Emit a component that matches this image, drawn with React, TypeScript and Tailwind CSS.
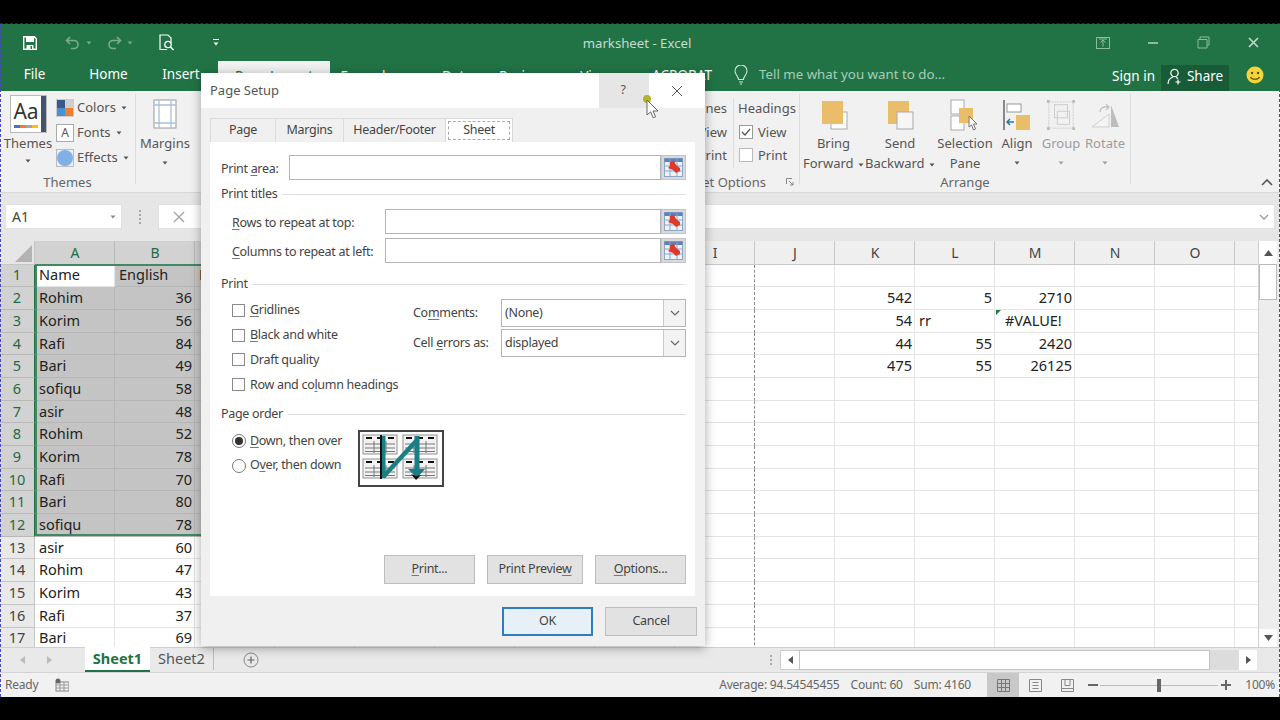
import React from "react";

const FONT = "font-['Noto_Sans','Open_Sans',sans-serif]";

const data: [string, string][] = [
  ["Name", "English"], ["Rohim", "36"], ["Korim", "56"], ["Rafi", "84"], ["Bari", "49"], ["sofiqu", "58"],
  ["asir", "48"], ["Rohim", "52"], ["Korim", "78"], ["Rafi", "70"], ["Bari", "80"], ["sofiqu", "78"],
  ["asir", "60"], ["Rohim", "47"], ["Korim", "43"], ["Rafi", "37"], ["Bari", "69"],
];
const right: Record<number, [string, string, string]> = {
  2: ["542", "5", "2710"],
  3: ["54", "rr", "#VALUE!"],
  4: ["44", "55", "2420"],
  5: ["475", "55", "26125"],
};
const letters = "ABCDEFGHIJKLMNO".split("");

function Caret({ className = "" }: { className?: string }) {
  return (
    <svg width="6" height="4" viewBox="0 0 6 4" className={className}>
      <path d="M0.5 0.5h5L3 3.5z" fill="currentColor" />
    </svg>
  );
}

function GridRow({ row }: { row: number }) {
  const sel = row <= 12;
  const d = data[row - 1];
  const r = right[row];
  return (
    <div className="flex h-[22.69px] shrink-0">
      <div className={`w-[35px] shrink-0 flex items-center justify-center text-[14.5px] border-r border-b ${sel ? "bg-[#d2d2d2] text-[#1f6b41] border-[#b9b9b9] border-r-[#217346]" : "bg-[#e9e9e9] text-[#444] border-[#c6c6c6]"}`}>
        {row}
      </div>
      {letters.map((l, i) => {
        const isA = l === "A";
        const isB = l === "B";
        const isC = l === "C";
        let cls = "bg-white border-[#e4e4e4]";
        let txt: React.ReactNode = null;
        let align = "justify-start";
        if (isA || isB) {
          txt = isA ? d[0] : d[1];
          if (isB && row > 1) align = "justify-end";
        }
        if (isC && row === 1) txt = "Math";
        if ((isA || isB || isC) && sel && !(row === 1 && isA)) cls = "bg-[#c4c4c4] border-[#b6b6b6]";
        if (r && l === "K") { txt = r[0]; align = "justify-end"; }
        if (r && l === "L") { txt = r[1]; align = r[1] === "rr" ? "justify-start" : "justify-end"; }
        if (r && l === "M") { txt = r[2]; align = r[2] === "#VALUE!" ? "justify-start pl-[10px]" : "justify-end"; }
        const dashed = l === "I" ? "border-r-[#8a8a8a] [border-right-style:dashed]" : "";
        return (
          <div key={i} className={`relative w-[80px] shrink-0 flex items-center pl-[4px] pr-[2px] text-[14.5px] text-[#222] border-r border-b ${cls} ${align} ${dashed}`}>
            {txt}
            {row === 3 && l === "M" && (
              <svg width="5" height="5" viewBox="0 0 5 5" className="absolute left-[1px] top-0">
                <path d="M0 0h5L0 5z" fill="#1f7a45" />
              </svg>
            )}
          </div>
        );
      })}
      <div className="flex-1 border-b border-[#e4e4e4]" />
    </div>
  );
}

function RefButton() {
  return (
    <div className="w-[25px] h-[25px] bg-[#d9d9d9] border border-[#c4c4c4] flex items-center justify-center shrink-0">
      <svg width="19" height="19" viewBox="0 0 19 19">
        <rect x="0.5" y="0.5" width="18" height="18" fill="#eef3fa" stroke="#8ba6cc" />
        <rect x="0.5" y="0.5" width="18" height="3.500" fill="#5f81b5" />
        <path d="M1 8h17M1 13h17M6 1v17M13 1v17" stroke="#8ba6cc" strokeWidth="1" />
        <path d="M6 4l4-1 2 4 4 3v3l-4 2-3-3-5-2 2-2z" fill="#e0392a" />
      </svg>
    </div>
  );
}

function Under({ pre, u, post }: { pre?: string; u: string; post?: string }) {
  return (
    <span className="whitespace-nowrap">
      {pre}
      <span className="underline decoration-[#777] underline-offset-2">{u}</span>
      {post}
    </span>
  );
}

function Check({ children }: { children: React.ReactNode }) {
  return (
    <div className="flex items-center h-[24.7px] gap-[5px] whitespace-nowrap">
      <div className="w-[13px] h-[13px] bg-white border border-[#8a8a8a] shrink-0" />
      <span className="pt-[1px]">{children}</span>
    </div>
  );
}

function Radio({ on, children }: { on?: boolean; children: React.ReactNode }) {
  return (
    <div className="flex items-center h-[24.7px] gap-[4px] whitespace-nowrap">
      <div className="w-[14px] h-[14px] rounded-full bg-white border border-[#777] flex items-center justify-center shrink-0">
        {on && <div className="w-[8px] h-[8px] rounded-full bg-[#333]" />}
      </div>
      <span>{children}</span>
    </div>
  );
}

function Section({ title }: { title: string }) {
  return (
    <div className="flex items-center gap-[5px] h-[20px]">
      <span>{title}</span>
      <div className="flex-1 h-px bg-[#dedede]" />
    </div>
  );
}

function Select({ value }: { value: string }) {
  return (
    <div className="w-[185px] h-[28px] bg-white border border-[#b5b5b5] flex items-center pl-[3px]">
      <span className="flex-1">{value}</span>
      <div className="w-[22px] h-full border-l border-[#c9c9c9] bg-[#f3f3f3] flex items-center justify-center">
        <svg width="10" height="6" viewBox="0 0 10 6"><path d="M1 1l4 4 4-4" fill="none" stroke="#666" strokeWidth="1.200" /></svg>
      </div>
    </div>
  );
}

function DlgBtn({ w, children, primary }: { w: string; children: React.ReactNode; primary?: boolean }) {
  return (
    <div className={`${w} flex items-center justify-center ${primary ? "bg-[#e7eff7] border-2 border-[#2f7cc0]" : "bg-[#e2e2e2] border border-[#bdbdbd]"}`}>
      {children}
    </div>
  );
}

function OrderPicture() {
  const table = (x: number, y: number) => (
    <g key={`${x}-${y}`}>
      <rect x={x} y={y} width="34" height="19" fill="#f2f2f2" stroke="#777" strokeWidth="0.8" />
      <path d={`M${x + 3} ${y + 3}h6M${x + 14} ${y + 3}h6M${x + 25} ${y + 3}h6`} stroke="#111" strokeWidth="2.200" />
      <path d={`M${x + 2} ${y + 9}h30M${x + 2} ${y + 13}h30M${x + 2} ${y + 16.500}h30M${x + 11} ${y + 6}v12M${x + 23} ${y + 6}v12`} stroke="#777" strokeWidth="1" />
    </g>
  );
  return (
    <div className="w-[86px] h-[57px] border-2 border-[#444] bg-white mt-[1px]">
      <svg width="82" height="53" viewBox="0 0 82 53">
        {table(3, 3)}{table(43, 3)}{table(3, 27)}{table(43, 27)}
        <path d="M23.500 4v42" stroke="#1a7f85" strokeWidth="4" />
        <path d="M21 3v44" stroke="#111" strokeWidth="2" />
        <path d="M23 45L58 7" stroke="#1a7f85" strokeWidth="4.500" />
        <path d="M57 4v36" stroke="#1a7f85" strokeWidth="5" />
        <path d="M48 37h17l-8 9z" fill="#1a7f85" />
        <path d="M51 42l5 6 5-5-5 1z" fill="#111" />
      </svg>
    </div>
  );
}

function Dialog() {
  return (
    <div className="absolute left-[201px] top-[73px] w-[504px] h-[573px] bg-[#f0f0f0] shadow-[0_2px_10px_rgba(0,0,0,0.35)] text-[12.5px] tracking-[-0.3px] text-[#444] flex flex-col">
      <div className="h-[35px] bg-white flex items-center shrink-0">
        <span className="pl-[9px] pt-[1px] text-[13px] tracking-normal text-[#555] flex-1">Page Setup</span>
        <div className="w-[50px] h-full bg-[#e6e6e6] flex items-center justify-center text-[#555] mr-[5px] pr-[2px]">?</div>
        <div className="w-[46px] h-full flex items-center justify-center mr-[5px]">
          <svg width="12" height="12" viewBox="0 0 12 12"><path d="M1 1l10 10M11 1L1 11" stroke="#555" strokeWidth="1" /></svg>
        </div>
      </div>
      <div className="ml-[9px] mr-[10px] flex h-[24px] mt-[10px] text-[#444] shrink-0">
        <div className="w-[65px] flex items-center justify-center border-t border-l border-[#dcdcdc]">Page</div>
        <div className="w-[68px] flex items-center justify-center border-t border-l border-[#dcdcdc]">Margins</div>
        <div className="w-[102px] flex items-center justify-center border-t border-l border-[#dcdcdc]">Header/Footer</div>
        <div className="w-[68px] bg-white flex items-center justify-center border-t border-x border-[#d9d9d9] p-[2px]">
          <div className="w-full h-full border border-dashed border-[#aaa] flex items-center justify-center">Sheet</div>
        </div>
      </div>
      <div className="ml-[9px] mr-[10px] h-[454px] bg-white pl-[11px] pr-[9px] pt-[13px] flex flex-col shrink-0">
        <div className="flex items-center h-[25px]">
          <span className="w-[68px] pt-[3px]"><Under pre="Print " u="a" post="rea:" /></span>
          <div className="flex-1 h-[25px] border border-[#b5b5b5] bg-white" />
          <RefButton />
        </div>
        <div className="mt-[4px]"><Section title="Print titles" /></div>
        <div className="flex items-center h-[25px] mt-[5px] pl-[11px]">
          <span className="w-[153px] pt-[3px]"><Under u="R" post="ows to repeat at top:" /></span>
          <div className="flex-1 h-[25px] border border-[#b5b5b5] bg-white" />
          <RefButton />
        </div>
        <div className="flex items-center h-[25px] mt-[4px] pl-[11px]">
          <span className="w-[153px] pt-[3px]"><Under u="C" post="olumns to repeat at left:" /></span>
          <div className="flex-1 h-[25px] border border-[#b5b5b5] bg-white" />
          <RefButton />
        </div>
        <div className="mt-[11px]"><Section title="Print" /></div>
        <div className="flex pl-[11px] mt-[4px]">
          <div className="w-[181px] flex flex-col">
            <Check><Under u="G" post="ridlines" /></Check>
            <Check><Under u="B" post="lack and white" /></Check>
            <Check>Draft quality</Check>
            <Check><Under pre="Row and co" u="l" post="umn headings" /></Check>
          </div>
          <div className="flex flex-col gap-[2px] mt-[1px]">
            <div className="flex items-center"><span className="w-[88px] pt-[1px]"><Under pre="Co" u="m" post="ments:" /></span><Select value="(None)" /></div>
            <div className="flex items-center"><span className="w-[88px] pt-[1px]"><Under pre="Cell " u="e" post="rrors as:" /></span><Select value="displayed" /></div>
          </div>
        </div>
        <div className="mt-[8px]"><Section title="Page order" /></div>
        <div className="flex pl-[11px] mt-[4px]">
          <div className="flex flex-col w-[126px]">
            <Radio on><Under u="D" post="own, then over" /></Radio>
            <Radio><Under pre="O" u="v" post="er, then down" /></Radio>
          </div>
          <OrderPicture />
        </div>
        <div className="flex justify-end gap-[12px] mt-[68px] h-[29px] text-[#444]">
          <DlgBtn w="w-[91px]"><Under u="P" post="rint..." /></DlgBtn>
          <DlgBtn w="w-[96px]"><Under pre="Print Previe" u="w" /></DlgBtn>
          <DlgBtn w="w-[91px]"><Under u="O" post="ptions..." /></DlgBtn>
        </div>
      </div>
      <div className="flex justify-end gap-[12px] h-[29px] mt-[11px] pr-[8px]">
        <DlgBtn w="w-[91px]" primary>OK</DlgBtn>
        <DlgBtn w="w-[92px]">Cancel</DlgBtn>
      </div>
      <div className="absolute left-[442px] top-[22px] w-[8px] h-[8px] rounded-full bg-[#b5b52c]" />
      <svg width="14" height="21" viewBox="0 0 14 21" className="absolute left-[445px] top-[26px]">
        <path d="M1 1v15l3.600-3.200 2.600 6 2.400-1-2.600-5.800H12z" fill="#fff" stroke="#666" strokeWidth="1" />
      </svg>
    </div>
  );
}

function TitleBar() {
  return (
    <div className="h-[37px] flex items-center shrink-0 text-[#cfe3d7]">
      <div className="w-[60px] flex justify-center">
        <svg width="14" height="14" viewBox="0 0 14 14"><path d="M0.700 0.700h10.600l2 2v10.600H0.700z" fill="none" stroke="#fff" strokeWidth="1.400" /><rect x="3" y="1" width="8" height="5" fill="#fff" /><rect x="3.500" y="9" width="7" height="4.300" fill="#fff" /><rect x="7.500" y="10" width="1.500" height="3" fill="#217346" /></svg>
      </div>
      <svg width="16" height="14" viewBox="0 0 16 14" className="opacity-40 ml-[5px]"><path d="M5 1L1.500 4.500 5 8M2 4.500h7a4 4 0 0 1 0 8H6" fill="none" stroke="#fff" strokeWidth="1.600" /></svg>
      <Caret className="ml-[5px] opacity-40 text-white" />
      <svg width="16" height="14" viewBox="0 0 16 14" className="opacity-40 ml-[14px]"><path d="M11 1l3.500 3.500L11 8M14 4.500H7a4 4 0 0 0 0 8h3" fill="none" stroke="#fff" strokeWidth="1.600" /></svg>
      <Caret className="ml-[5px] opacity-40 text-white" />
      <svg width="18" height="18" viewBox="0 0 18 18" className="ml-[25px]"><path d="M9 15.500H2V1h8l3 3v5" fill="none" stroke="#fff" strokeWidth="1.200" /><circle cx="10" cy="10.500" r="3.200" fill="none" stroke="#fff" strokeWidth="1.300" /><path d="M12.500 13l3 3" stroke="#fff" strokeWidth="1.500" /></svg>
      <div className="ml-[37px] flex flex-col items-center gap-[2px] text-white">
        <div className="w-[6px] h-px bg-white" />
        <Caret />
      </div>
      <div className="flex-1 text-center text-[13.2px] pr-[41px] pt-[2px] text-[#c5dccf]">marksheet - Excel</div>
      <div className="flex items-center w-[184px] text-[#8dbba1]">
        <svg width="14" height="12" viewBox="0 0 14 12"><rect x="0.500" y="0.500" width="13" height="11" fill="none" stroke="currentColor" /><path d="M7 9.500V3M4.500 5.500L7 3l2.500 2.500M3 2h8" fill="none" stroke="currentColor" /></svg>
        <div className="w-[10px] h-[2px] bg-current ml-[38px]" />
        <svg width="13" height="13" viewBox="0 0 13 13" className="ml-[39px]"><path d="M3 3V1h9v8h-2M1 3.500h9v8.500H1z" fill="none" stroke="currentColor" /></svg>
        <svg width="11" height="11" viewBox="0 0 11 11" className="ml-[38px]"><path d="M1 1l9 9M10 1l-9 9" stroke="#bcd6c7" strokeWidth="1.700" /></svg>
      </div>
    </div>
  );
}

function TabBar() {
  return (
    <div className="h-[30px] flex items-stretch shrink-0 text-[13.5px] text-white">
      <div className="w-[69px] flex items-center justify-center pb-[3px]">File</div>
      <div className="w-[79px] flex items-center justify-center pb-[3px]">Home</div>
      <div className="w-[70px] flex items-center justify-center pr-[4px] pb-[3px]">Insert</div>
      <div className="w-[112px] bg-[#f1f1f1] text-[#217346] flex items-center justify-center">Page Layout</div>
      <div className="w-[80px] flex items-center justify-center">Formulas</div>
      <div className="w-[94px] flex items-center justify-center">Data</div>
      <div className="w-[34px] flex items-center justify-center">Review</div>
      <div className="w-[114px] flex items-center justify-center">View</div>
      <div className="w-[60px] flex items-center justify-center whitespace-nowrap pb-[1px]">ACROBAT</div>
      <div className="flex items-center gap-[11px] pl-[22px] pb-[3px] text-[#a7cdb8] text-[13.3px]">
        <svg width="14" height="20" viewBox="0 0 14 20"><path d="M4.500 14.500C4.500 11 1 10 1 6a6 6 0 0 1 12 0c0 4-3.500 5-3.500 8.500zM5 17h4M6 19h2" fill="none" stroke="#cfe3d7" strokeWidth="1.100" /></svg>
        <span>Tell me what you want to do...</span>
      </div>
      <div className="flex-1" />
      <div className="flex items-center pr-[6px]">Sign in</div>
      <div className="w-[68px] bg-[#185c37] flex items-center justify-center gap-[4px] h-[26px] self-end pb-[4px]">
        <svg width="16" height="17" viewBox="0 0 16 17"><circle cx="7.500" cy="5" r="3.700" fill="none" stroke="#fff" strokeWidth="1.200" /><path d="M1 16c0-4 2-6 5-7M9 9.500c1 .3 1.500.6 2 1M11 11.500v5M8.500 14h5" fill="none" stroke="#fff" strokeWidth="1.200" /></svg>
        <span>Share</span>
      </div>
      <div className="w-[51px] flex items-center justify-center pb-[3px]">
        <svg width="18" height="18" viewBox="0 0 18 18"><circle cx="9" cy="9" r="8.500" fill="#f4d63a" /><circle cx="6" cy="7" r="1.200" fill="#5a4b10" /><circle cx="12" cy="7" r="1.200" fill="#5a4b10" /><path d="M4.500 11c1.500 3 7.500 3 9 0" fill="none" stroke="#5a4b10" strokeWidth="1.200" /></svg>
      </div>
    </div>
  );
}

function Sep() {
  return <div className="w-px h-[90px] bg-[#dcdcdc] mt-[3px] shrink-0" />;
}

function Big({ w, lines, children, dim, caret = false }: { w: string; lines: React.ReactNode[]; children: React.ReactNode; dim?: boolean; caret?: boolean }) {
  return (
    <div className={`${w} flex flex-col items-center shrink-0 ${dim ? "text-[#9d9d9d]" : "text-[#555]"}`}>
      <div className="h-[36px] mt-[6px] flex items-center justify-center">{children}</div>
      <div className="leading-[20px] text-center whitespace-nowrap">
        {lines.map((l, i) => <div key={i}>{l}</div>)}
        {caret && <div className="flex justify-center h-[20px] items-center"><Caret /></div>}
      </div>
    </div>
  );
}

function Ribbon() {
  return (
    <div className="h-[102px] bg-[#f1f1f1] flex text-[13px] text-[#555] shrink-0 border-b border-[#d8d8d8] overflow-hidden">
      {/* Themes */}
      <div className="w-[135px] shrink-0 flex flex-col">
        <div className="flex h-[84px]">
          <div className="w-[56px] flex flex-col items-center">
            <div className="w-[37px] h-[38px] mt-[4px] border border-[#bbb] bg-white relative flex items-center justify-center pb-[6px] pr-[4px]">
              <span className="text-[21px] text-[#333] leading-none">Aa</span>
              <div className="absolute right-0 top-0 w-[5px] h-[36px] bg-[#44546a]" />
              <div className="absolute left-[3px] bottom-[4px] w-[24px] h-[3px] bg-[linear-gradient(90deg,#4472c4_25%,#ed7d31_25%,#ed7d31_50%,#a5a5a5_50%,#a5a5a5_75%,#ffc000_75%)]" />
            </div>
            <div className="leading-[20px]">Themes</div>
            <Caret className="mt-[6px]" />
          </div>
          <div className="flex flex-col gap-[6px] pt-[7px]">
            <div className="flex items-center h-[19px] gap-[3px]">
              <div className="w-[18px] h-[18px] grid grid-cols-2 grid-rows-2 border border-[#ccc]">
                <div className="bg-[#3a5a8a]" /><div className="bg-[#cfcfcf]" /><div className="bg-[#4a90d9]" /><div className="bg-[#ed7d31]" />
              </div>
              <span>Colors</span><Caret className="ml-[2px]" />
            </div>
            <div className="flex items-center h-[19px] gap-[3px]">
              <div className="w-[18px] h-[18px] border border-[#aaa] bg-white flex items-center justify-center text-[12px]">A</div>
              <span>Fonts</span><Caret className="ml-[2px]" />
            </div>
            <div className="flex items-center h-[19px] gap-[3px]">
              <div className="w-[18px] h-[18px] border border-[#bbb] bg-[#eef] flex items-center justify-center">
                <div className="w-[16px] h-[16px] rounded-full bg-[#7fb0e6]" />
              </div>
              <span>Effects</span><Caret className="ml-[2px]" />
            </div>
          </div>
        </div>
        <div className="text-center text-[#666] mt-[-1px]">Themes</div>
      </div>
      <Sep />
      {/* Page setup, mostly hidden */}
      <div className="flex-1 min-w-0 flex pl-[4px]">
        <Big w="w-[50px]" lines={["Margins"]} caret>
          <svg width="24" height="32" viewBox="0 0 24 32"><rect x="1" y="1" width="22" height="28" fill="#fff" stroke="#999" /><path d="M6 1v28M18 1v28" stroke="#a9c0d8" strokeWidth="1.300" /><path d="M1 6h22M1 24h22" stroke="#a9c0d8" strokeWidth="1.300" /></svg>
        </Big>
      </div>
      {/* Sheet options */}
      <div className="w-[98px] shrink-0 flex flex-col">
        <div className="flex h-[84px]">
          <div className="w-[33px] shrink-0 border-r border-[#dcdcdc] h-[70px] mt-[7px] flex flex-col items-end pr-[6px] gap-[3.500px] leading-[20px]">
            <span>Gridlines</span><span>View</span><span>Print</span>
          </div>
          <div className="pl-[4px] flex flex-col mt-[7px] leading-[20px] gap-[3.500px]">
            <span>Headings</span>
            <div className="flex items-center gap-[5px] pl-[1px]">
              <div className="w-[14px] h-[14px] bg-white border border-[#999] flex items-center justify-center">
                <svg width="10" height="8" viewBox="0 0 10 8"><path d="M1 4l3 3 5-6" fill="none" stroke="#555" strokeWidth="1.200" /></svg>
              </div>
              <span>View</span>
            </div>
            <div className="flex items-center gap-[5px] pl-[1px]">
              <div className="w-[14px] h-[14px] bg-white border border-[#bbb]" />
              <span>Print</span>
            </div>
          </div>
        </div>
        <div className="flex items-center text-[#666] mt-[-1px] pr-[5px]">
          <div className="flex-1 min-w-0 flex justify-end pr-[20px] whitespace-nowrap"><span className="shrink-0">Sheet Options</span></div>
          <svg width="8" height="8" viewBox="0 0 8 8" className="shrink-0"><path d="M0.500 6V0.500H6M3 3l4 4M7 4v3H4" fill="none" stroke="#888" /></svg>
        </div>
      </div>
      <Sep />
      {/* Arrange */}
      <div className="w-[330px] shrink-0 flex flex-col">
        <div className="flex h-[84px]">
          <Big w="w-[67px]" lines={["Bring", <span key="f">Forward <Caret className="inline ml-[1px] align-middle" /></span>]}>
            <svg width="28" height="30" viewBox="0 0 28 30"><rect x="11" y="12" width="16" height="17" fill="#fff" stroke="#aaa" /><rect x="2" y="1" width="21" height="23" fill="#eabd6b" /></svg>
          </Big>
          <Big w="w-[66px]" lines={["Send", <span key="b">Backward <Caret className="inline ml-[1px] align-middle" /></span>]}>
            <svg width="28" height="30" viewBox="0 0 28 30"><rect x="2" y="1" width="21" height="23" fill="#eabd6b" /><rect x="11" y="12" width="16" height="17" fill="#f6f6f6" stroke="#aaa" /></svg>
          </Big>
          <Big w="w-[64px]" lines={["Selection", "Pane"]}>
            <svg width="30" height="32" viewBox="0 0 30 32"><rect x="1" y="1" width="13" height="14" fill="#fff" stroke="#aaa" /><rect x="1" y="17" width="13" height="14" fill="#fff" stroke="#aaa" /><rect x="9" y="9" width="14" height="15" fill="#eabd6b" /><path d="M19 17v11l2.500-2 2 5 2-1-2-5h3.500z" fill="#fff" stroke="#777" /></svg>
          </Big>
          <Big w="w-[40px]" lines={["Align"]} caret>
            <svg width="28" height="30" viewBox="0 0 28 30"><path d="M1 0v30" stroke="#888" strokeWidth="2" /><rect x="4" y="4" width="14" height="8" fill="#fff" stroke="#999" /><rect x="13" y="15" width="14" height="15" fill="#eabd6b" /><path d="M11 22H4M7 19l-3 3 3 3" fill="none" stroke="#2e75b6" strokeWidth="1.500" /></svg>
          </Big>
          <Big w="w-[48px]" lines={["Group"]} dim caret>
            <svg width="30" height="30" viewBox="0 0 30 32"><rect x="2" y="2" width="26" height="28" fill="none" stroke="#ccc" strokeDasharray="2 1" /><rect x="8" y="5" width="14" height="14" fill="none" stroke="#ccc" /><rect x="11" y="12" width="13" height="14" fill="none" stroke="#ccc" /><path d="M0 0h3v3H0zM27 0h3v3h-3zM0 29h3v3H0zM27 29h3v3h-3z" fill="#bbb" /></svg>
          </Big>
          <Big w="w-[40px]" lines={["Rotate"]} dim caret>
            <svg width="28" height="26" viewBox="0 0 28 26"><path d="M20 3v22h8z" fill="#bdbdbd" /><path d="M1 25L18 12v13z" fill="#f4f4f4" stroke="#cfcfcf" /><path d="M9 10c0-4 4-6 8-5M15 2l3 3-3 3" fill="none" stroke="#c2c2c2" strokeWidth="1.300" /></svg>
          </Big>
        </div>
        <div className="text-[#666] mt-[-1px] text-center">Arrange</div>
      </div>
      <Sep />
      <div className="w-[149px] shrink-0 relative">
        <svg width="12" height="7" viewBox="0 0 12 7" className="absolute right-[7px] bottom-[6px]"><path d="M1 6l5-5 5 5" fill="none" stroke="#555" strokeWidth="1.600" /></svg>
      </div>
    </div>
  );
}

function FormulaBar() {
  return (
    <div className="h-[48px] bg-[#e6e6e6] shrink-0 flex items-start pt-[11px] text-[14px] text-[#444]">
      <div className="w-[117px] h-[25px] ml-[5px] bg-white flex items-center pl-[6px] border border-[#e0e0e0] shrink-0">
        <span className="flex-1">A1</span>
        <Caret className="mr-[5px] text-[#888]" />
      </div>
      <div className="w-[36px] flex flex-col items-center justify-center gap-[2px] h-[25px] shrink-0">
        <div className="w-[2px] h-[2px] bg-[#aaa]" /><div className="w-[2px] h-[2px] bg-[#aaa]" /><div className="w-[2px] h-[2px] bg-[#aaa]" /><div className="w-[2px] h-[2px] bg-[#aaa]" />
      </div>
      <div className="flex-1 h-[25px] bg-white mr-[5px] border border-[#e0e0e0] flex items-center pl-[14px]">
        <svg width="12" height="12" viewBox="0 0 12 12"><path d="M1 1l10 10M11 1L1 11" stroke="#aaa" strokeWidth="1.500" /></svg>
        <div className="flex-1" />
        <svg width="10" height="6" viewBox="0 0 10 6" className="mr-[5px]"><path d="M1 1l4 4 4-4" fill="none" stroke="#999" strokeWidth="1.300" /></svg>
      </div>
    </div>
  );
}

function Sheet() {
  const rows = Array.from({ length: 17 }, (_, i) => i + 1);
  return (
    <div className="flex-1 flex min-h-0 bg-white">
      <div className="w-[1258px] shrink-0 flex flex-col overflow-hidden">
        <div className="flex h-[23.500px] shrink-0">
          <div className="w-[35px] shrink-0 bg-[#e6e6e6] border-r border-b border-[#c6c6c6] flex items-end justify-end p-[2px]">
            <svg width="17" height="17" viewBox="0 0 17 17"><path d="M17 0v17H0z" fill="#b3b3b3" /></svg>
          </div>
          {letters.map((l) => {
            const sel = l === "A" || l === "B" || l === "C";
            return (
              <div key={l} className={`w-[80px] shrink-0 flex items-center justify-center pl-[1px] text-[14px] border-r border-b ${sel ? "bg-[#d2d2d2] text-[#1f6b41] border-[#b9b9b9] border-b-[#217346]" : "bg-[#efefef] text-[#444] border-[#c9c9c9]"}`}>
                {l}
              </div>
            );
          })}
          <div className="flex-1 bg-[#efefef] border-b border-[#c9c9c9]" />
        </div>
        <div className="relative">
          {rows.map((r) => <GridRow key={r} row={r} />)}
          <div className="absolute left-[35px] top-[-1px] w-[240px] h-[272px] border-2 border-[#3f8a63]" />
        </div>
      </div>
      <div className="flex-1 bg-[#ededed] flex flex-col items-center pr-[3px] border-l border-[#cfcfcf]">
        <div className="w-full h-[23px] flex items-center justify-center bg-white">
          <svg width="9" height="6" viewBox="0 0 9 6"><path d="M4.500 0l4.500 6H0z" fill="#555" /></svg>
        </div>
        <div className="w-full h-[36px] bg-white border border-[#bbb]" />
        <div className="flex-1" />
        <div className="w-full h-[18px] flex items-center justify-center bg-white">
          <svg width="9" height="6" viewBox="0 0 9 6"><path d="M0 0h9L4.500 6z" fill="#555" /></svg>
        </div>
      </div>
    </div>
  );
}

function SheetTabs() {
  return (
    <div className="h-[25px] shrink-0 bg-[#e9e9e9] border-t border-[#cfcfcf] flex items-stretch text-[14.500px] text-[#555]">
      <div className="w-[85px] flex items-center pl-[20px] gap-[22px] shrink-0">
        <svg width="5" height="8" viewBox="0 0 5 8"><path d="M5 0v8L0 4z" fill="#bbb" /></svg>
        <svg width="5" height="8" viewBox="0 0 5 8"><path d="M0 0v8l5-4z" fill="#bbb" /></svg>
      </div>
      <div className="w-[65px] bg-white flex items-center justify-center font-bold text-[#217346] border-b-2 border-[#217346] -mt-px shrink-0">Sheet1</div>
      <div className="w-[64px] flex items-center justify-center border-r border-[#bbb] shrink-0 mb-[2px]">Sheet2</div>
      <div className="w-[73px] flex items-center justify-center shrink-0">
        <svg width="16" height="16" viewBox="0 0 16 16"><circle cx="8" cy="8" r="7" fill="none" stroke="#888" /><path d="M8 4.500v7M4.500 8h7" stroke="#666" strokeWidth="1.200" /></svg>
      </div>
      <div className="flex-1 flex items-center justify-end pr-[8px]">
        <div className="flex flex-col gap-[2px]"><div className="w-[2px] h-[2px] bg-[#aaa]" /><div className="w-[2px] h-[2px] bg-[#aaa]" /><div className="w-[2px] h-[2px] bg-[#aaa]" /></div>
      </div>
      <div className="w-[477px] h-[20px] mt-[2px] flex shrink-0">
        <div className="w-[19px] bg-white border-y border-l border-[#ccc] flex items-center justify-center"><svg width="5" height="8" viewBox="0 0 5 8"><path d="M5 0v8L0 4z" fill="#555" /></svg></div>
        <div className="w-[411px] bg-white border border-[#c4c4c4]" />
        <div className="flex-1 bg-[#dcdcdc]" />
        <div className="w-[18px] bg-white flex items-center justify-center"><svg width="5" height="8" viewBox="0 0 5 8"><path d="M0 0v8l5-4z" fill="#555" /></svg></div>
      </div>
      <div className="w-[23px] shrink-0" />
    </div>
  );
}

function StatusBar() {
  return (
    <div className="h-[25px] shrink-0 bg-[#f1f1f1] border-t border-[#d4d4d4] flex items-center text-[12px] tracking-[-0.2px] text-[#666]">
      <span className="pl-[5px]">Ready</span>
      <svg width="14" height="14" viewBox="0 0 14 14" className="ml-[17px]"><rect x="1" y="4" width="13" height="9" fill="none" stroke="#888" /><path d="M1 7h13M1 10h13M5 4v9M9 4v9" stroke="#999" /><circle cx="3" cy="3" r="2.500" fill="#666" /></svg>
      <div className="flex-1" />
      <span>Average: 94.54545455</span>
      <span className="ml-[11px]">Count: 60</span>
      <span className="ml-[11px]">Sum: 4160</span>
      <div className="w-[32px] h-full bg-[#c8c8c8] ml-[16px] flex items-center justify-center">
        <svg width="13" height="13" viewBox="0 0 13 13"><path d="M.5.500h12v12H.5zM.5 4.500h12M.5 8.500h12M4.500.500v12M8.500.500v12" fill="none" stroke="#777" /></svg>
      </div>
      <div className="w-[32px] flex justify-center">
        <svg width="13" height="13" viewBox="0 0 13 13"><path d="M.5.500h12v12H.5zM3.500 3.500h6M3.500 6.500h6M3.500 9.500h6" fill="none" stroke="#888" /></svg>
      </div>
      <div className="w-[32px] flex justify-center">
        <svg width="13" height="13" viewBox="0 0 13 13"><path d="M.5.500h12v12H.5zM4 .500v6h5v-6M.5 9.500h12" fill="none" stroke="#888" /></svg>
      </div>
      <div className="w-[10px] h-[2px] bg-[#666] ml-[5px] shrink-0" />
      <div className="w-[118px] h-px bg-[#bbb] ml-[2px] relative shrink-0">
        <div className="absolute left-[57px] -top-[6px] w-[4px] h-[13px] bg-[#666]" />
      </div>
      <svg width="10" height="10" viewBox="0 0 10 10" className="ml-[3px] shrink-0"><path d="M5 0v10M0 5h10" stroke="#666" strokeWidth="2" /></svg>
      <span className="w-[49px] text-right pr-[5px] shrink-0">100%</span>
    </div>
  );
}

export default function App() {
  return (
    <div className={`${FONT} w-[1280px] h-[720px] bg-black overflow-hidden relative flex flex-col pt-[24px] pb-[23px]`}>
      <div className="bg-[#217346] shrink-0 h-[67px] flex flex-col">
        <TitleBar />
        <TabBar />
      </div>
      <Ribbon />
      <FormulaBar />
      <Sheet />
      <SheetTabs />
      <StatusBar />
      <Dialog />
      <div className="absolute left-0 top-[24px] bottom-[23px] w-0 border-l border-dashed border-[#4a4ac0]" />
      <div className="absolute right-0 top-[24px] bottom-[23px] w-0 border-r border-dashed border-[#4a4ac0]" />
      <div className="absolute left-0 right-0 top-[23px] h-0 border-t border-dashed border-[#23236e]" />
    </div>
  );
}
